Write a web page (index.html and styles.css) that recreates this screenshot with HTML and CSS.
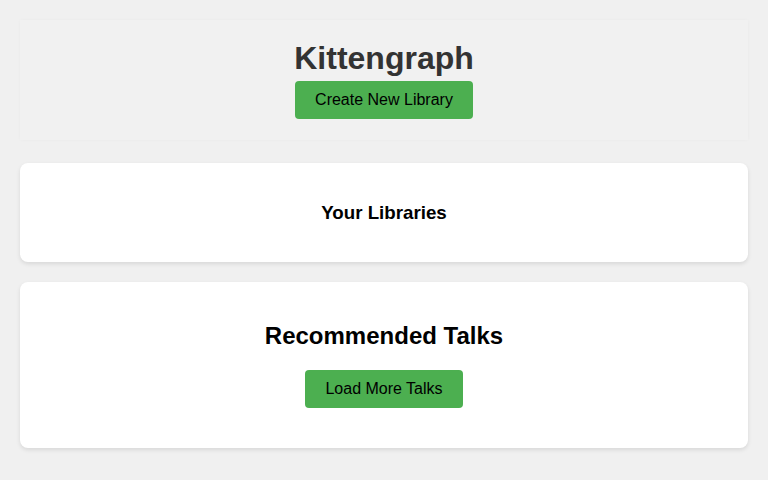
FILE: index.html
```html
<!DOCTYPE html>
<html lang="en">
<head>
<meta charset="utf-8">
<title>Kittengraph</title>
<link rel="stylesheet" href="styles.css">
</head>
<body>
<header class="header">
  <h1 class="title">Kittengraph</h1>
  <button class="btn">Create New Library</button>
</header>
<section class="card">
  <h3 class="card-title-sm">Your Libraries</h3>
</section>
<section class="card">
  <h2 class="card-title">Recommended Talks</h2>
  <button class="btn btn-more">Load More Talks</button>
</section>
</body>
</html>
```

FILE: styles.css
```css
html, body {
  margin: 0;
  padding: 0;
}
body {
  background: #f0f0f0;
  padding: 20px;
  font-family: "Liberation Sans", Arial, sans-serif;
  color: #000;
}
.header {
  background: #f1f1f1;
  box-shadow: 0 0 3px rgba(0, 0, 0, 0.03);
  padding: 20px 20px 21px;
  text-align: center;
  margin-bottom: 23px;
}
.title {
  font-size: 32px;
  font-weight: bold;
  color: #333;
  margin: 0 0 4px;
  line-height: 37px;
}
.btn {
  font-family: "Liberation Sans", Arial, sans-serif;
  font-size: 16px;
  background: #4caf50;
  color: #000;
  border: none;
  border-radius: 4px;
  padding: 10px 20px;
  line-height: 18px;
  cursor: pointer;
}
.card {
  background: #fff;
  border-radius: 8px;
  box-shadow: 0 2px 4px rgba(0, 0, 0, 0.1);
  padding: 20px;
  margin-bottom: 20px;
  text-align: center;
}
.card-title-sm {
  font-size: 18.72px;
  margin: 18.72px 0;
}
.card-title {
  font-size: 24px;
  margin: 20px 0;
}
.btn-more {
  margin-bottom: 20px;
}
```
